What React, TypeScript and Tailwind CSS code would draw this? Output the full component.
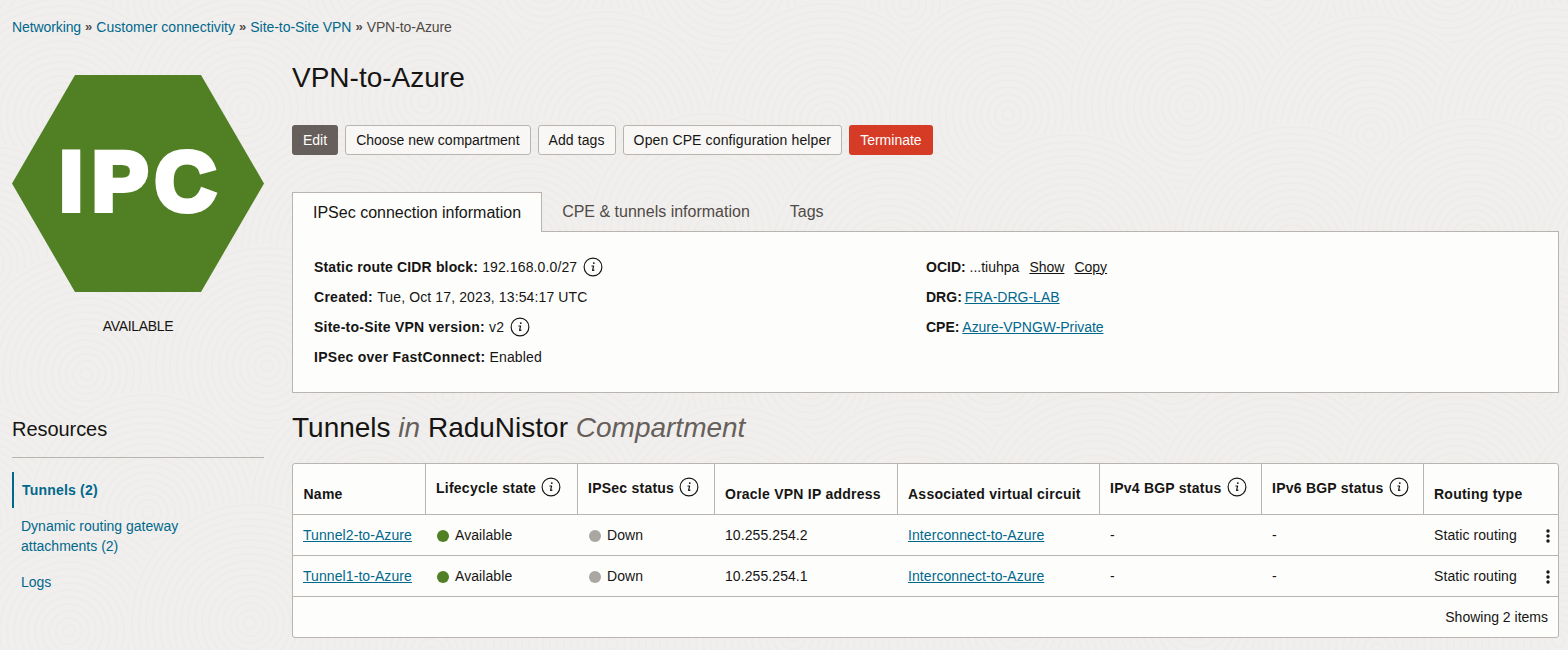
import type { ReactNode } from "react";

const rows = [
  { name: "Tunnel2-to-Azure", ip: "10.255.254.2" },
  { name: "Tunnel1-to-Azure", ip: "10.255.254.1" },
];

// faint fingerprint tiles behind the page
const swirls: { cx: number; cy: number }[] = [];
for (let row = 0; row < 6; row++) {
  for (let col = 0; col < 10; col++) {
    swirls.push({
      cx: col * 185 - 40 + (row % 2) * 90 + ((col * 37 + row * 53) % 41),
      cy: row * 130 - 30 + ((col * 29 + row * 17) % 37),
    });
  }
}
const rings = Array.from({ length: 17 }, (_, i) => 6 + i * 7);

function PageTexture() {
  return (
    <svg className="pointer-events-none absolute inset-0 h-full w-full" viewBox="0 0 1568 650" fill="none">
      {swirls.map((swirl) => (
        <g key={`${swirl.cx}-${swirl.cy}`}>
          <circle cx={swirl.cx} cy={swirl.cy} r="122" fill="#f1efed" />
          {rings.map((r) => (
            <circle key={r} cx={swirl.cx} cy={swirl.cy} r={r} stroke="#eeecea" strokeWidth="2" />
          ))}
        </g>
      ))}
    </svg>
  );
}

function InfoIcon() {
  return (
    <svg className="h-[20px] w-[20px] shrink-0" viewBox="0 0 20 20" fill="none">
      <circle cx="10" cy="10" r="8.9" stroke="#161513" strokeWidth="1.15" />
      <circle cx="10.8" cy="6.1" r="0.95" fill="#161513" />
      <path
        d="M8.9 9h1.7l-1 4.1c-.1.5.3.7 1.4-.1"
        stroke="#161513"
        strokeWidth="1.15"
        strokeLinecap="round"
        strokeLinejoin="round"
      />
    </svg>
  );
}

function Crumb({ children, className = "" }: { children: ReactNode; className?: string }) {
  return <span className={`text-[#00688c] ${className}`}>{children}</span>;
}

function Sep() {
  return <span className="mx-[4px] text-[13px] font-bold text-[#4f4a46]">»</span>;
}

function ActionButton({ children, className = "" }: { children: ReactNode; className?: string }) {
  return (
    <button className={`h-[30px] rounded-[3px] border border-[#b9b4af] bg-[#f8f7f5] px-[10px] text-[#161513] ${className}`}>
      {children}
    </button>
  );
}

function Field({ label, labelClass = "", wide, children }: { label: string; labelClass?: string; wide?: boolean; children: ReactNode }) {
  return (
    <div className={`flex h-[30px] items-center whitespace-pre ${wide ? "tracking-[0.12px]" : ""}`}>
      <span className={`font-bold ${labelClass}`}>{label}: </span>
      {children}
    </div>
  );
}

function HeadCell({ children, info, last }: { children: ReactNode; info?: boolean; last?: boolean }) {
  return (
    <th
      className={`h-[50px] pl-[10.5px] pr-[4px] text-left align-bottom font-bold tracking-[0.24px] ${info ? "pb-[18px]" : "pb-[12px]"} ${last ? "" : "border-r border-[#b9b4af]"}`}
    >
      <span className="flex items-center gap-[5px] leading-[16px]">
        {children}
        {info && <span className="-my-[3px] -translate-y-[1px]"><InfoIcon /></span>}
      </span>
    </th>
  );
}

function StatusDot({ color }: { color: string }) {
  return <span className={`ml-px mr-[6px] inline-block h-[12px] w-[12px] rounded-full ${color}`} />;
}

function Cell({ children, first }: { children: ReactNode; first?: boolean }) {
  return (
    <td className={`h-[41px] border-t border-[#b9b4af] pr-[10px] pt-[2px] whitespace-nowrap tracking-[0.08px] ${first ? "pl-[10px]" : "pl-[11px]"}`}>
      {children}
    </td>
  );
}

export default function App() {
  return (
    <div className="relative h-[650px] overflow-hidden bg-[#f1efed] font-['Liberation_Sans',Arial,sans-serif] text-[14px] text-[#161513]">
      <PageTexture />
      <div className="relative flex flex-col pl-[12px] pr-[9px] pt-[19px]">
        <nav className="flex h-[16px] items-center leading-[16px]">
          <Crumb className="tracking-[-0.1px]">Networking</Crumb>
          <Sep />
          <Crumb className="tracking-[0.05px]">Customer connectivity</Crumb>
          <Sep />
          <Crumb className="tracking-[-0.05px]">Site-to-Site VPN</Crumb>
          <Sep />
          <span className="tracking-[-0.1px] text-[#4f4a46]">VPN-to-Azure</span>
        </nav>

        <div className="mt-[26px] flex gap-[28px]">
          <aside className="w-[252px] shrink-0 pt-[14px]">
            <svg className="h-[217px] w-[252px]" viewBox="0 0 252 217">
              <polygon points="63,0 189,0 252,108.5 189,217 63,217 0,108.5" fill="#508023" />
              <text
                x="47.5 80 143"
                y="135"
                fill="#fff"
                fontSize="84"
                fontWeight="700"
                stroke="#fff"
                strokeWidth="6"
              >
                IPC
              </text>
            </svg>
            <div className="mt-[26px] text-center leading-[16px] tracking-[-0.3px]">AVAILABLE</div>
            <h2 className="mt-[83px] text-[20px] leading-[24px] tracking-[-0.05px]">Resources</h2>
            <div className="mt-[16px] border-t border-[#b9b4af]" />
            <ul className="mt-[14px] text-[#00688c]">
              <li className="flex h-[36px] items-center border-l-[2px] border-[#00688c] pl-[8px] font-bold tracking-[0.2px]">Tunnels (2)</li>
              <li className="py-[8px] pl-[9px] leading-[20px]">
                Dynamic routing gateway
                <br />
                attachments (2)
              </li>
              <li className="flex h-[36px] items-center pl-[9px]">Logs</li>
            </ul>
          </aside>

          <main className="min-w-0 flex-1">
            <h1 className="text-[28px] leading-[34px]">VPN-to-Azure</h1>
            <div className="mt-[30px] flex gap-[7px]">
              <button className="h-[30px] rounded-[3px] bg-[#665f5b] px-[11px] text-white">Edit</button>
              <ActionButton>Choose new compartment</ActionButton>
              <ActionButton className="tracking-[0.1px]">Add tags</ActionButton>
              <ActionButton className="tracking-[0.13px]">Open CPE configuration helper</ActionButton>
              <button className="h-[30px] rounded-[3px] bg-[#d63b25] px-[11px] text-white">Terminate</button>
            </div>

            <div className="relative z-10 mt-[37px] flex h-[40px] text-[16px]">
              <div className="flex h-[40px] items-center border border-b-0 border-[#b9b4af] bg-[#fdfdfc] px-[20px]">
                IPSec connection information
              </div>
              <div className="flex items-center px-[20px] text-[#4f4a46]">CPE &amp; tunnels information</div>
              <div className="flex items-center px-[20px] text-[#4f4a46]">Tags</div>
            </div>
            <section className="-mt-px grid h-[162px] grid-cols-[612px_1fr] border border-[#b9b4af] bg-[#fdfdfc] pl-[21px] pt-[20px]">
              <div>
                <Field wide labelClass="tracking-[0.16px]" label="Static route CIDR block">
                  192.168.0.0/27
                  <span className="ml-[6px]"><InfoIcon /></span>
                </Field>
                <Field wide labelClass="tracking-[0.28px]" label="Created">Tue, Oct 17, 2023, 13:54:17 UTC</Field>
                <Field wide labelClass="tracking-[0.24px]" label="Site-to-Site VPN version">
                  v2
                  <span className="ml-[6px]"><InfoIcon /></span>
                </Field>
                <Field wide labelClass="tracking-[0.28px]" label="IPSec over FastConnect">Enabled</Field>
              </div>
              <div>
                <Field label="OCID">
                  ...tiuhpa
                  <span className="ml-[10px] underline">Show</span>
                  <span className="ml-[10px] underline">Copy</span>
                </Field>
                <Field label="DRG">
                  <span className="-ml-px text-[#00688c] underline">FRA-DRG-LAB</span>
                </Field>
                <Field label="CPE">
                  <span className="-ml-px tracking-[-0.05px] text-[#00688c] underline">Azure-VPNGW-Private</span>
                </Field>
              </div>
            </section>

            <h2 className="mt-[18px] text-[28px] leading-[34px]">
              Tunnels <em className="text-[#665f5b]">in</em> RaduNistor <em className="text-[#665f5b]">Compartment</em>
            </h2>

            <div className="mt-[18px] rounded-[3px] border border-[#b9b4af] bg-[#fdfdfc]">
              <table className="w-full table-fixed border-collapse">
                <colgroup>
                  <col className="w-[132px]" />
                  <col className="w-[152px]" />
                  <col className="w-[137px]" />
                  <col className="w-[183px]" />
                  <col className="w-[202px]" />
                  <col className="w-[162px]" />
                  <col className="w-[162px]" />
                  <col />
                </colgroup>
                <thead>
                  <tr>
                    <HeadCell>Name</HeadCell>
                    <HeadCell info>Lifecycle state</HeadCell>
                    <HeadCell info>IPSec status</HeadCell>
                    <HeadCell>Oracle VPN IP address</HeadCell>
                    <HeadCell>Associated virtual circuit</HeadCell>
                    <HeadCell info>IPv4 BGP status</HeadCell>
                    <HeadCell info>IPv6 BGP status</HeadCell>
                    <HeadCell last>Routing type</HeadCell>
                  </tr>
                </thead>
                <tbody>
                  {rows.map((row) => (
                    <tr key={row.name}>
                      <Cell first>
                        <span className="text-[#00688c] underline">{row.name}</span>
                      </Cell>
                      <Cell>
                        <span className="flex items-center">
                          <StatusDot color="bg-[#508023]" />
                          Available
                        </span>
                      </Cell>
                      <Cell>
                        <span className="flex items-center">
                          <StatusDot color="bg-[#aaa6a1]" />
                          Down
                        </span>
                      </Cell>
                      <Cell>{row.ip}</Cell>
                      <Cell>
                        <span className="text-[#00688c] underline">Interconnect-to-Azure</span>
                      </Cell>
                      <Cell>-</Cell>
                      <Cell>-</Cell>
                      <Cell>
                        <span className="flex items-center justify-between">
                          Static routing
                          <svg className="-mr-[2px] h-[14px] w-[4px]" viewBox="0 0 4 14" fill="#161513">
                            <circle cx="2" cy="2" r="1.7" />
                            <circle cx="2" cy="7" r="1.7" />
                            <circle cx="2" cy="12" r="1.7" />
                          </svg>
                        </span>
                      </Cell>
                    </tr>
                  ))}
                </tbody>
              </table>
              <div className="flex h-[41px] items-center justify-end border-t border-[#b9b4af] pr-[10px]">Showing 2 items</div>
            </div>
          </main>
        </div>
      </div>
    </div>
  );
}
